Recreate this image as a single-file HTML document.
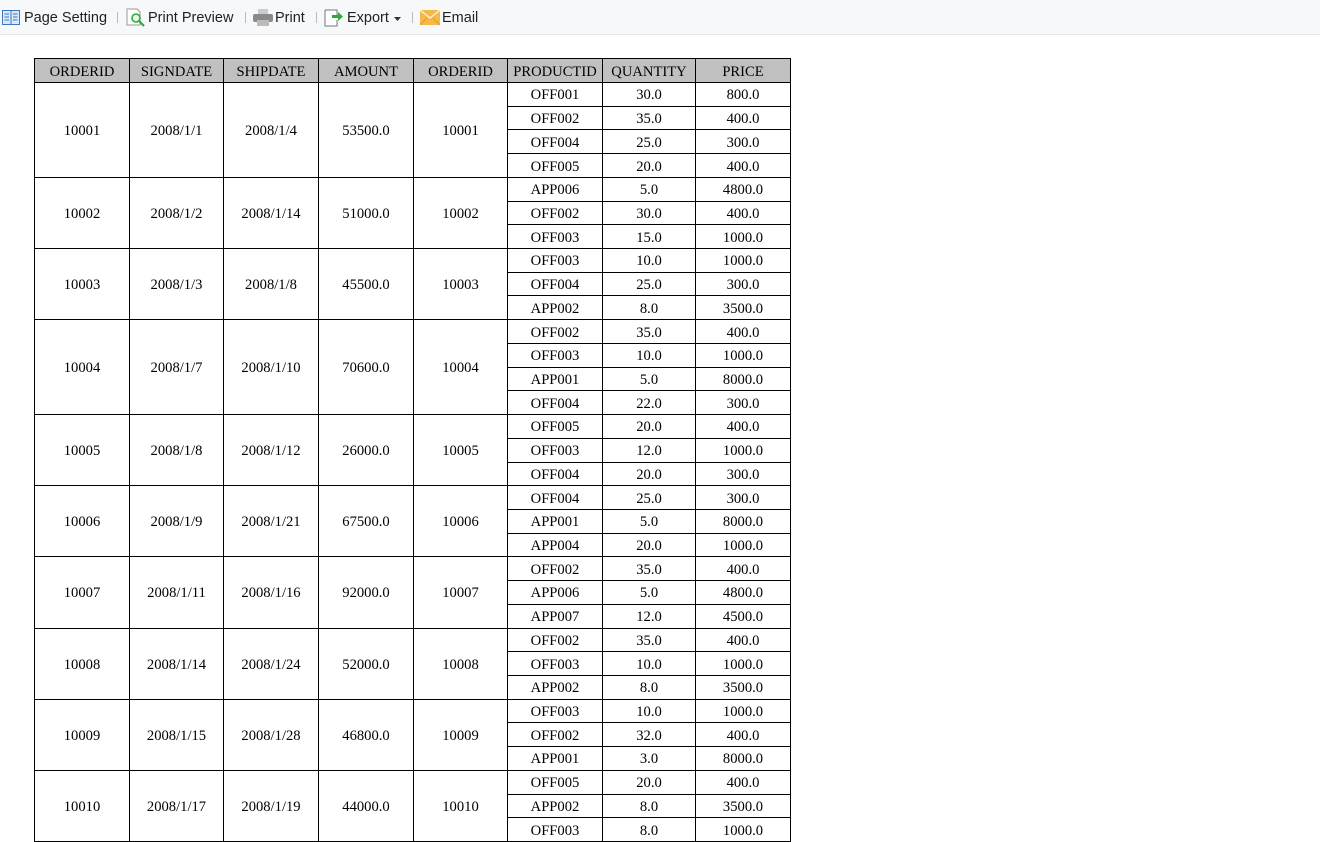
<!DOCTYPE html>
<html><head><meta charset="utf-8"><style>
body{margin:0;width:1320px;height:841px;overflow:hidden;background:#fff;font-family:"Liberation Sans",sans-serif}
.tb{height:34px;background:#f7f8fa;border-bottom:1px solid #e4e6ea;position:relative;font-size:14.5px;color:#222}
.tb span{position:absolute;top:10px;white-space:nowrap}
.sep{position:absolute;top:12px;width:1px;height:11px;background:#bbb}
.ic{position:absolute;top:8px}
table{position:absolute;left:34px;top:58px;border-collapse:collapse;table-layout:fixed;font-family:"Liberation Serif",serif;font-size:14.6px;color:#000}
td{border:1px solid #000;text-align:center;padding:2px 0 0 0;height:20.72px;line-height:16px;overflow:hidden;white-space:nowrap}
tr.h td{background:#c0c0c0;height:21px}
</style></head><body>
<div class="tb">
<svg class="ic" style="left:2px;top:10px" width="18" height="15" viewBox="0 0 18 15"><rect x="0.5" y="0.5" width="17" height="14" fill="#dbe9f7" stroke="#3a78c2"/><line x1="9" y1="1" x2="9" y2="14" stroke="#3a78c2"/><g stroke="#3a78c2"><line x1="2.5" y1="4" x2="7" y2="4"/><line x1="2.5" y1="7" x2="7" y2="7"/><line x1="2.5" y1="10" x2="7" y2="10"/><line x1="11" y1="4" x2="15.5" y2="4"/><line x1="11" y1="7" x2="15.5" y2="7"/><line x1="11" y1="10" x2="15.5" y2="10"/></g></svg>
<span style="left:24px">Page Setting</span>
<div class="sep" style="left:117px"></div>
<svg class="ic" style="left:126px" width="20" height="19" viewBox="0 0 20 19"><path d="M1 1h10l3 3v13H1z" fill="#fff" stroke="#999"/><circle cx="10" cy="10" r="4" fill="#e8f6e8" stroke="#2eaa3a" stroke-width="1.6"/><line x1="13" y1="13" x2="18" y2="18" stroke="#2eaa3a" stroke-width="2.2"/></svg>
<span style="left:148px">Print Preview</span>
<div class="sep" style="left:245px"></div>
<svg class="ic" style="left:253px;top:9px" width="20" height="17" viewBox="0 0 20 17"><rect x="5" y="0" width="10" height="5" fill="#ccc"/><rect x="0" y="5" width="20" height="8" rx="2" fill="#8a8a8a"/><rect x="4" y="11" width="12" height="6" fill="#bbb"/></svg>
<span style="left:275px">Print</span>
<div class="sep" style="left:316px"></div>
<svg class="ic" style="left:324px" width="20" height="19" viewBox="0 0 20 19"><path d="M1 2h12v5M13 12v6H1V2" fill="#fff" stroke="#777"/><path d="M8 7h6V4l5 4.5-5 4.5V10H8z" fill="#2eaa3a"/></svg>
<span style="left:347px">Export</span>
<svg style="position:absolute;left:394px;top:17px" width="7" height="4"><path d="M0 0h7L3.5 4z" fill="#333"/></svg>
<div class="sep" style="left:412px"></div>
<svg class="ic" style="left:420px;top:10px" width="20" height="15" viewBox="0 0 20 15"><rect width="20" height="15" fill="#f5b849"/><path d="M0 0l10 8 10-8" fill="none" stroke="#fff3d8" stroke-width="1.4"/><path d="M0 15l7-7M20 15l-7-7" stroke="#e09b2a"/></svg>
<span style="left:442px">Email</span>
</div>
<table>
<colgroup><col style="width:95px"><col style="width:94px"><col style="width:95px"><col style="width:95px"><col style="width:94px"><col style="width:95px"><col style="width:93px"><col style="width:95px"></colgroup>
<tr class="h"><td>ORDERID</td><td>SIGNDATE</td><td>SHIPDATE</td><td>AMOUNT</td><td>ORDERID</td><td>PRODUCTID</td><td>QUANTITY</td><td>PRICE</td></tr>
<tr><td rowspan="4">10001</td><td rowspan="4">2008/1/1</td><td rowspan="4">2008/1/4</td><td rowspan="4">53500.0</td><td rowspan="4">10001</td><td>OFF001</td><td>30.0</td><td>800.0</td></tr>
<tr><td>OFF002</td><td>35.0</td><td>400.0</td></tr>
<tr><td>OFF004</td><td>25.0</td><td>300.0</td></tr>
<tr><td>OFF005</td><td>20.0</td><td>400.0</td></tr>
<tr><td rowspan="3">10002</td><td rowspan="3">2008/1/2</td><td rowspan="3">2008/1/14</td><td rowspan="3">51000.0</td><td rowspan="3">10002</td><td>APP006</td><td>5.0</td><td>4800.0</td></tr>
<tr><td>OFF002</td><td>30.0</td><td>400.0</td></tr>
<tr><td>OFF003</td><td>15.0</td><td>1000.0</td></tr>
<tr><td rowspan="3">10003</td><td rowspan="3">2008/1/3</td><td rowspan="3">2008/1/8</td><td rowspan="3">45500.0</td><td rowspan="3">10003</td><td>OFF003</td><td>10.0</td><td>1000.0</td></tr>
<tr><td>OFF004</td><td>25.0</td><td>300.0</td></tr>
<tr><td>APP002</td><td>8.0</td><td>3500.0</td></tr>
<tr><td rowspan="4">10004</td><td rowspan="4">2008/1/7</td><td rowspan="4">2008/1/10</td><td rowspan="4">70600.0</td><td rowspan="4">10004</td><td>OFF002</td><td>35.0</td><td>400.0</td></tr>
<tr><td>OFF003</td><td>10.0</td><td>1000.0</td></tr>
<tr><td>APP001</td><td>5.0</td><td>8000.0</td></tr>
<tr><td>OFF004</td><td>22.0</td><td>300.0</td></tr>
<tr><td rowspan="3">10005</td><td rowspan="3">2008/1/8</td><td rowspan="3">2008/1/12</td><td rowspan="3">26000.0</td><td rowspan="3">10005</td><td>OFF005</td><td>20.0</td><td>400.0</td></tr>
<tr><td>OFF003</td><td>12.0</td><td>1000.0</td></tr>
<tr><td>OFF004</td><td>20.0</td><td>300.0</td></tr>
<tr><td rowspan="3">10006</td><td rowspan="3">2008/1/9</td><td rowspan="3">2008/1/21</td><td rowspan="3">67500.0</td><td rowspan="3">10006</td><td>OFF004</td><td>25.0</td><td>300.0</td></tr>
<tr><td>APP001</td><td>5.0</td><td>8000.0</td></tr>
<tr><td>APP004</td><td>20.0</td><td>1000.0</td></tr>
<tr><td rowspan="3">10007</td><td rowspan="3">2008/1/11</td><td rowspan="3">2008/1/16</td><td rowspan="3">92000.0</td><td rowspan="3">10007</td><td>OFF002</td><td>35.0</td><td>400.0</td></tr>
<tr><td>APP006</td><td>5.0</td><td>4800.0</td></tr>
<tr><td>APP007</td><td>12.0</td><td>4500.0</td></tr>
<tr><td rowspan="3">10008</td><td rowspan="3">2008/1/14</td><td rowspan="3">2008/1/24</td><td rowspan="3">52000.0</td><td rowspan="3">10008</td><td>OFF002</td><td>35.0</td><td>400.0</td></tr>
<tr><td>OFF003</td><td>10.0</td><td>1000.0</td></tr>
<tr><td>APP002</td><td>8.0</td><td>3500.0</td></tr>
<tr><td rowspan="3">10009</td><td rowspan="3">2008/1/15</td><td rowspan="3">2008/1/28</td><td rowspan="3">46800.0</td><td rowspan="3">10009</td><td>OFF003</td><td>10.0</td><td>1000.0</td></tr>
<tr><td>OFF002</td><td>32.0</td><td>400.0</td></tr>
<tr><td>APP001</td><td>3.0</td><td>8000.0</td></tr>
<tr><td rowspan="3">10010</td><td rowspan="3">2008/1/17</td><td rowspan="3">2008/1/19</td><td rowspan="3">44000.0</td><td rowspan="3">10010</td><td>OFF005</td><td>20.0</td><td>400.0</td></tr>
<tr><td>APP002</td><td>8.0</td><td>3500.0</td></tr>
<tr><td>OFF003</td><td>8.0</td><td>1000.0</td></tr>
</table>
</body></html>
